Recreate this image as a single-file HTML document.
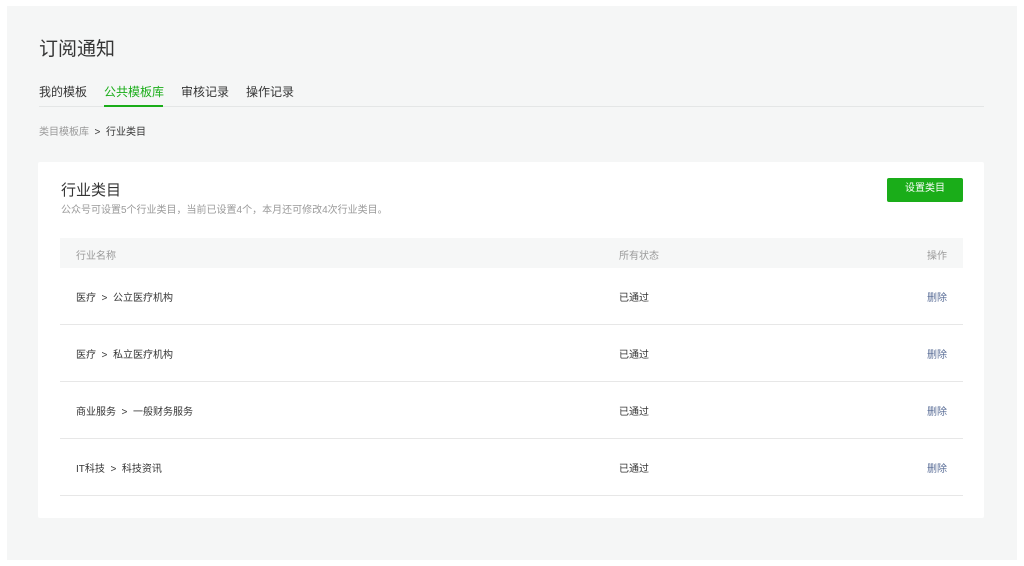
<!DOCTYPE html>
<html><head><meta charset="utf-8"><style>
*{margin:0;padding:0;box-sizing:border-box}
body{width:1024px;height:566px;background:#fff;font-family:"Liberation Sans","Noto Sans CJK SC",sans-serif;position:relative;overflow:hidden;color:#353535}
.panel{position:absolute;left:7px;top:6px;width:1010px;height:554px;background:#f5f6f6}
.abs{position:absolute;white-space:nowrap}
.card{position:absolute;left:38px;top:162px;width:946px;height:356px;background:#fff;border-radius:2px}
.row{position:absolute;left:22px;width:903px;height:57px;border-bottom:1px solid #e7e7e7;font-size:10px;color:#353535}
.row span{position:absolute;top:21px}
</style></head><body>
<div class="panel"></div>
<div class="abs" style="left:39px;top:34px;font-size:19px;color:#353535">订阅通知</div>
<div class="abs" style="left:39px;top:83px;font-size:12px;color:#353535">我的模板</div>
<div class="abs" style="left:104px;top:83px;font-size:12px;color:#1aad19">公共模板库</div>
<div class="abs" style="left:181px;top:83px;font-size:12px;color:#353535">审核记录</div>
<div class="abs" style="left:246px;top:83px;font-size:12px;color:#353535">操作记录</div>
<div class="abs" style="left:39px;top:106px;width:945px;height:1px;background:#e4e6e6"></div>
<div class="abs" style="left:104px;top:105px;width:59px;height:2px;background:#1aad19"></div>
<div class="abs" style="left:39px;top:123px;font-size:10px;color:#9a9a9a">类目模板库 <span style="color:#353535">&nbsp;&gt;&nbsp; 行业类目</span></div>
<div class="card">
<div class="abs" style="left:23px;top:17px;font-size:15px;color:#353535">行业类目</div>
<div class="abs" style="left:23px;top:39px;font-size:10px;color:#9a9a9a">公众号可设置5个行业类目，当前已设置4个，本月还可修改4次行业类目。</div>
<div class="abs" style="left:849px;top:16px;width:76px;height:24px;background:#1aad19;border-radius:2px;color:#fff;font-size:10px;text-align:center;line-height:22px">设置类目</div>
<div class="abs" style="left:22px;top:76px;width:903px;height:30px;background:#f6f7f7;font-size:10px;color:#9a9a9a">
<span class="abs" style="left:16px;top:9px">行业名称</span><span class="abs" style="left:559px;top:9px">所有状态</span><span class="abs" style="right:16px;top:9px">操作</span></div>
<div class="row" style="top:106px"><span style="left:16px">医疗 &nbsp;&gt;&nbsp; 公立医疗机构</span><span style="left:559px">已通过</span><span style="right:16px;color:#576b95">删除</span></div>
<div class="row" style="top:163px"><span style="left:16px">医疗 &nbsp;&gt;&nbsp; 私立医疗机构</span><span style="left:559px">已通过</span><span style="right:16px;color:#576b95">删除</span></div>
<div class="row" style="top:220px"><span style="left:16px">商业服务 &nbsp;&gt;&nbsp; 一般财务服务</span><span style="left:559px">已通过</span><span style="right:16px;color:#576b95">删除</span></div>
<div class="row" style="top:277px"><span style="left:16px">IT科技 &nbsp;&gt;&nbsp; 科技资讯</span><span style="left:559px">已通过</span><span style="right:16px;color:#576b95">删除</span></div>
</div>
</body></html>
